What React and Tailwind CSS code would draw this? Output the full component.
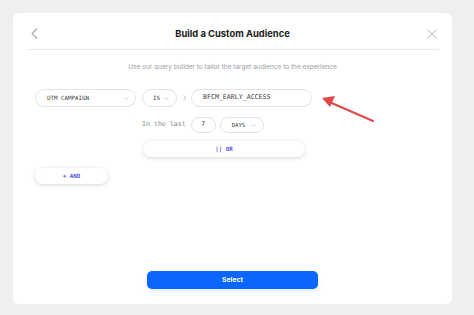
import React from "react";

const mono = { fontFamily: '"DejaVu Sans Mono", "Liberation Mono", monospace' };

function Caret() {
  return (
    <svg width="5" height="3" viewBox="0 0 5 3" className="shrink-0">
      <path d="M0.5 0.5 L2.5 2.5 L4.5 0.5" fill="none" stroke="#c4c4c4" strokeWidth="0.8" />
    </svg>
  );
}

export default function App() {
  return (
    <div className="w-[474px] h-[315px] bg-[#efefef] pl-[13px] pt-[13px] overflow-hidden" style={{ fontFamily: 'Inter, "Noto Sans", sans-serif' }}>
      <div className="relative w-[439px] h-[291px] bg-white rounded-[6px] flex flex-col">
        {/* header */}
        <div className="h-[36px] flex items-center justify-between pl-[18px] pr-[15px] pt-[5px]">
          <svg width="7" height="11" viewBox="0 0 7 11">
            <path d="M6 0.5 L1 5.5 L6 10.5" fill="none" stroke="#a8a8a8" strokeWidth="1.1" />
          </svg>
          <div className="text-[9.4px] font-bold text-[#1a1a1a] leading-none">Build a Custom Audience</div>
          <svg width="10" height="10" viewBox="0 0 10 10">
            <path d="M0.5 0.5 L9.5 9.5 M9.5 0.5 L0.5 9.5" fill="none" stroke="#b8b8b8" strokeWidth="1" />
          </svg>
        </div>
        <div className="mx-[13px] border-b border-[#ececec]" />
        <div className="mt-[13px] h-[8px] text-center text-[6.5px] leading-[8px] text-[#9a9ca3]">
          Use our query builder to tailor the target audience to the experience
        </div>

        {/* row 1 */}
        <div className="mt-[18px] ml-[22px] flex items-center h-[18px]" style={mono}>
          <div className="w-[101px] h-[18px] rounded-full border border-[#e3e3e3] flex items-center justify-between pl-[11px] pr-[6px] text-[5.8px] text-[#3c3c3c]">
            <span>UTM CAMPAIGN</span>
            <Caret />
          </div>
          <div className="ml-[6px] w-[35px] h-[18px] rounded-full border border-[#e3e3e3] flex items-center justify-between pl-[10px] pr-[7px] text-[5.8px] text-[#3c3c3c]">
            <span>IS</span>
            <Caret />
          </div>
          <svg width="4" height="6" viewBox="0 0 4 6" className="ml-[6px]">
            <path d="M0.5 0.5 L3 3 L0.5 5.5" fill="none" stroke="#b5b5b5" strokeWidth="0.8" />
          </svg>
          <div className="ml-[4px] w-[121px] h-[18px] rounded-full border border-[#e3e3e3] flex items-center pl-[11px] text-[6.6px] text-[#3c3c3c]">
            BFCM_EARLY_ACCESS
          </div>
        </div>

        {/* row 2 */}
        <div className="mt-[10px] ml-[129px] flex items-center h-[16px]" style={mono}>
          <span className="text-[6.6px] text-[#8a8a8a]">In the last</span>
          <div className="ml-[5px] w-[25px] h-[16px] rounded-full border border-[#e3e3e3] flex items-center justify-center text-[6.6px] text-[#3c3c3c]">7</div>
          <div className="ml-[4px] w-[44px] h-[16px] rounded-full border border-[#e3e3e3] flex items-center justify-between pl-[11px] pr-[7px] text-[5.6px] text-[#3c3c3c]">
            <span>DAYS</span>
            <Caret />
          </div>
        </div>

        {/* OR */}
        <div className="mt-[8px] ml-[130px] w-[162px] h-[16px] rounded-full bg-white shadow-[0_1px_4px_rgba(0,0,0,0.16)] flex items-center justify-center text-[5.8px] font-bold text-[#4b58d8]" style={mono}>
          || OR
        </div>

        {/* AND */}
        <div className="mt-[11px] ml-[22px] w-[73px] h-[16px] rounded-full bg-white shadow-[0_1px_4px_rgba(0,0,0,0.16)] flex items-center justify-center text-[5.8px] font-bold text-[#4b58d8]" style={mono}>
          + AND
        </div>

        {/* select */}
        <div className="mt-auto mb-[15px] ml-[134px] w-[171px] h-[18px] rounded-[5px] bg-[#0a66ff] shadow-[0_2px_4px_rgba(10,102,255,0.15)] flex items-center justify-center text-[6.8px] font-bold text-white">
          Select
        </div>

        {/* annotation arrow */}
        <svg className="absolute left-0 top-0 pointer-events-none" width="439" height="291" viewBox="0 0 439 291">
          <line x1="314" y1="88" x2="360" y2="108" stroke="#e04848" strokeWidth="2" strokeLinecap="round" />
          <polygon points="309,85 322,83 317,94" fill="#e04848" />
        </svg>
      </div>
    </div>
  );
}
